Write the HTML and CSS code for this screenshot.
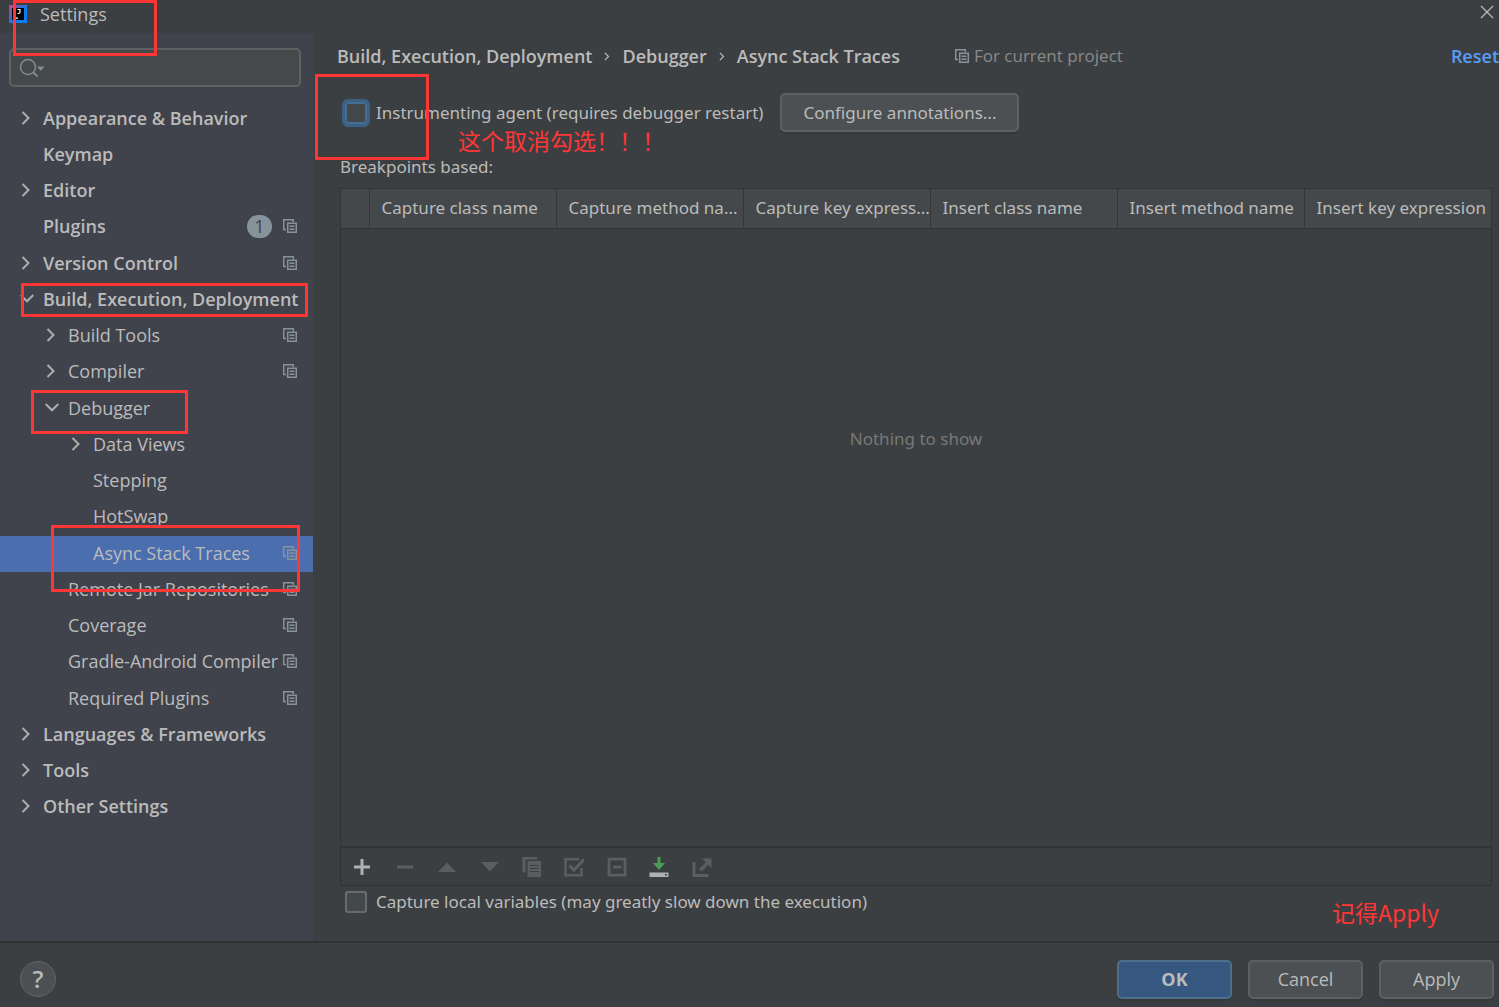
FILE: index.html
```
<!DOCTYPE html>
<html lang="en">
<head>
  <meta charset="UTF-8" />
  <meta name="viewport" content="width=device-width, initial-scale=1.0"/>
  <title>Settings</title>
  <link rel="stylesheet" href="styles.css">
</head>
<body>
  <svg class="sprite" aria-hidden="true">
    <symbol id="right" viewBox="0 0 10 14"><path d="M1.5 1 7.5 7l-6 6" fill="none" stroke="currentColor" stroke-width="2"/></symbol>
    <symbol id="down" viewBox="0 0 14 10"><path d="M.7 1 7 7.3 13.300 1" fill="none" stroke="currentColor" stroke-width="2"/></symbol>
    <symbol id="copy" viewBox="0 0 14 14">
      <path d="M3 10.500H.7V.7h9.600V3" fill="none" stroke="currentColor" stroke-width="1.500"/>
      <path d="M4.700 4.200h8.600v9.100H4.700zM6.500 7.300h5M6.500 10.300h5" fill="none" stroke="currentColor" stroke-width="1.500"/>
    </symbol>
  </svg>

  <header class="titlebar">
    <svg class="logo" viewBox="0 0 18 18" aria-hidden="true">
      <defs>
        <linearGradient id="brand" x1="0" y1="0" x2="1" y2="1">
          <stop offset="0" stop-color="#d8407c"/><stop offset=".35" stop-color="#4f63c8"/><stop offset=".6" stop-color="#0c7cf5"/>
        </linearGradient>
      </defs>
      <rect width="18" height="18" fill="url(#brand)"/>
      <rect x="3" y="3" width="12" height="12" fill="#000"/>
      <path d="M4.500 4.500h2M5.500 4.500v4M8.500 4.500H11V7q0 1.500-1.500 1.500H8.500M4.500 13.200h4.500" fill="none" stroke="#fff" stroke-width="1.200"/>
    </svg>
    <h1>Settings</h1>
    <button class="close" aria-label="Close">
      <svg viewBox="0 0 14 14"><path d="M1 1l12 12M13 1 1 13" stroke="currentColor" stroke-width="1.200"/></svg>
    </button>
  </header>

  <div class="content">
    <aside class="sidebar">
      <div class="search">
        <svg viewBox="0 0 26 20" aria-hidden="true">
          <circle cx="9" cy="9" r="7.500" fill="none" stroke="currentColor" stroke-width="1.500"/>
          <path d="M14 14l4.500 4.500" stroke="currentColor" stroke-width="2"/>
          <path d="M18 8.500h7.500L21.700 13z" fill="currentColor"/>
        </svg>
        <input type="text" aria-label="Search settings">
      </div>
      <ul class="tree">
        <li class="top"><svg class="right"><use href="#right"/></svg><span>Appearance &amp; Behavior</span></li>
        <li class="top"><span>Keymap</span></li>
        <li class="top"><svg class="right"><use href="#right"/></svg><span>Editor</span></li>
        <li class="top"><span>Plugins</span><b class="badge">1</b><svg class="copy"><use href="#copy"/></svg></li>
        <li class="top"><svg class="right"><use href="#right"/></svg><span>Version Control</span><svg class="copy"><use href="#copy"/></svg></li>
        <li class="top"><svg class="down"><use href="#down"/></svg><span>Build, Execution, Deployment</span></li>
        <li class="sub"><svg class="right"><use href="#right"/></svg><span>Build Tools</span><svg class="copy"><use href="#copy"/></svg></li>
        <li class="sub"><svg class="right"><use href="#right"/></svg><span>Compiler</span><svg class="copy"><use href="#copy"/></svg></li>
        <li class="sub"><svg class="down"><use href="#down"/></svg><span>Debugger</span></li>
        <li class="leaf"><svg class="right"><use href="#right"/></svg><span>Data Views</span></li>
        <li class="leaf"><span>Stepping</span></li>
        <li class="leaf"><span>HotSwap</span></li>
        <li class="leaf selected"><span>Async Stack Traces</span><svg class="copy"><use href="#copy"/></svg></li>
        <li class="sub"><span>Remote Jar Repositories</span><svg class="copy"><use href="#copy"/></svg></li>
        <li class="sub"><span>Coverage</span><svg class="copy"><use href="#copy"/></svg></li>
        <li class="sub"><span>Gradle-Android Compiler</span><svg class="copy"><use href="#copy"/></svg></li>
        <li class="sub"><span>Required Plugins</span><svg class="copy"><use href="#copy"/></svg></li>
        <li class="top"><svg class="right"><use href="#right"/></svg><span>Languages &amp; Frameworks</span></li>
        <li class="top"><svg class="right"><use href="#right"/></svg><span>Tools</span></li>
        <li class="top"><svg class="right"><use href="#right"/></svg><span>Other Settings</span></li>
      </ul>
    </aside>

    <main class="main">
      <nav class="crumbs">
        <span>Build, Execution, Deployment</span>
        <svg class="sep"><use href="#right"/></svg>
        <span>Debugger</span>
        <svg class="sep"><use href="#right"/></svg>
        <span>Async Stack Traces</span>
        <span class="scope"><svg class="copy"><use href="#copy"/></svg>For current project</span>
        <a href="#" class="reset">Reset</a>
      </nav>

      <div class="agent">
        <input type="checkbox" id="agent" class="focused">
        <label for="agent">Instrumenting agent (requires debugger restart)</label>
        <button class="btn configure">Configure annotations...</button>
      </div>

      <p class="caption">Breakpoints based:</p>

      <div class="panel">
        <table>
          <thead>
            <tr>
              <th class="check"></th><th>Capture class name</th><th>Capture method na...</th><th>Capture key express...</th><th>Insert class name</th><th>Insert method name</th><th>Insert key expression</th>
            </tr>
          </thead>
        </table>
        <div class="empty">Nothing to show</div>
        <div class="toolbar">
          <button class="on" aria-label="Add"><svg viewBox="0 0 20 20"><path d="M10 2v16M2 10h16" stroke="currentColor" stroke-width="3"/></svg></button>
          <button aria-label="Remove"><svg viewBox="0 0 20 20"><path d="M2 10h16" stroke="currentColor" stroke-width="3"/></svg></button>
          <button aria-label="Up"><svg viewBox="0 0 20 20"><path d="M1 15h18L10 5.500z" fill="currentColor"/></svg></button>
          <button aria-label="Down"><svg viewBox="0 0 20 20"><path d="M1 5h18l-9 9.500z" fill="currentColor"/></svg></button>
          <button aria-label="Duplicate"><svg viewBox="0 0 20 20"><path d="M2 15.500V1h13" fill="none" stroke="currentColor" stroke-width="3"/><path d="M5.500 4H19v16H5.500z" fill="currentColor"/><path d="M8 8.500h8.500M8 11.500h8.500M8 14.500h8.500" stroke="#3c3f41"/></svg></button>
          <button aria-label="Enable selected"><svg viewBox="0 0 20 20"><path d="M15 2.200H1.500v16h16V11" fill="none" stroke="currentColor" stroke-width="2.500"/><path d="M5.500 8.500l4.500 4.500L20 2.500" fill="none" stroke="currentColor" stroke-width="3"/></svg></button>
          <button aria-label="Disable selected"><svg viewBox="0 0 20 20"><path d="M2 2.200h16v16H2zM6 10.200h8.500" fill="none" stroke="currentColor" stroke-width="2.800"/></svg></button>
          <button class="on" aria-label="Import"><svg viewBox="0 0 20 20"><path d="M8.500 0h3v6H16l-6 7-6-7h4.500z" fill="#499c54"/><path d="M.5 15.500h19v5H.5z" fill="currentColor"/><path d="M16 17h2v1.500h-2z" fill="#3c3f41"/></svg></button>
          <button aria-label="Export"><svg viewBox="0 0 20 20"><path d="M2 5v13.500h14.500" fill="none" stroke="currentColor" stroke-width="3"/><path d="M10 1.500h9.500V11L16.300 7.700 9.500 14.500 7 12l6.800-6.800z" fill="currentColor"/></svg></button>
        </div>
      </div>

      <div class="locals">
        <input type="checkbox" id="locals">
        <label for="locals">Capture local variables (may greatly slow down the execution)</label>
      </div>
    </main>
  </div>

  <footer class="footer">
    <button class="help" aria-label="Help">?</button>
    <button class="btn primary">OK</button>
    <button class="btn">Cancel</button>
    <button class="btn">Apply</button>
  </footer>

  <!-- red marks over the dialog -->
  <div class="mark mark-title"></div>
  <div class="mark mark-build"></div>
  <div class="mark mark-debugger"></div>
  <div class="mark mark-async"></div>
  <div class="mark mark-agent"></div>
  <p class="note note-agent" lang="zh-CN">这个取消勾选！！！</p>
  <p class="note note-apply" lang="zh-CN">记得Apply</p>
</body>
</html>
```
FILE: styles.css
```
* {
  box-sizing: border-box;
}
body {
  position: relative;
  display: flex;
  flex-direction: column;
  min-height: 100vh;
  margin: 0;
  overflow-x: hidden;
  background-color: #3c3f41;
  color: #bbbbbb;
  font-family: "Open Sans", "Noto Sans CJK SC", sans-serif;
  font-size: 18px;
  line-height: 24px;
}
button, input {
  font: inherit;
  color: inherit;
}
h1, p, ul {
  margin: 0;
  padding: 0;
}
svg {
  display: block;
  flex: none;
}
.sprite {
  position: absolute;
  width: 0;
  height: 0;
}

/* title bar */
.titlebar {
  display: flex;
  align-items: center;
  height: 33px;
  padding: 0 5px 6px 9px;
}
.logo {
  width: 18px;
  height: 18px;
}
.titlebar h1 {
  margin-left: 13px;
  font-size: 18px;
  font-weight: normal;
}
.close {
  margin-left: auto;
  padding: 0 0 3px;
  border: 0;
  background: none;
}
.close svg {
  width: 14px;
  height: 14px;
}

.content {
  display: flex;
  flex: 1;
}

/* sidebar */
.sidebar {
  flex: none;
  width: 313px;
  padding-top: 15px;
  background-color: #40434c;
}
.search {
  display: flex;
  align-items: center;
  height: 39px;
  margin: 0 12px 14px 9px;
  padding-left: 8px;
  border: 2px solid #5f6263;
  border-radius: 5px;
  background-color: #45494a;
}
.search svg {
  width: 26px;
  height: 20px;
  color: #7d8b96;
}
.search input {
  flex: 1;
  min-width: 0;
  border: 0;
  outline: 0;
  background: none;
}
.tree {
  display: grid;
  grid-template-columns: 100%;
  grid-auto-rows: 1fr;
  height: 725px;
  list-style: none;
}
.tree li {
  display: flex;
  align-items: center;
  padding-right: 16px;
  padding-bottom: 3px;
  white-space: nowrap;
}
.tree span {
  margin-right: auto;
}
.top {
  padding-left: 43px;
  font-weight: 600;
}
.sub {
  padding-left: 68px;
}
.leaf {
  padding-left: 93px;
}
.selected {
  background-color: #4b6eaf;
}
.right {
  width: 10px;
  height: 14px;
  margin: 0 12px 0 -22px;
  color: #adadad;
}
.down {
  width: 14px;
  height: 10px;
  margin: 0 9px 0 -23px;
  color: #adadad;
}
.copy {
  width: 14px;
  height: 14px;
  color: #87939a;
}
.badge {
  width: 25px;
  height: 23px;
  margin-right: 11px;
  border-radius: 12px;
  background-color: #87939a;
  color: #40434c;
  font-weight: normal;
  line-height: 23px;
  text-align: center;
}

/* right side */
.main {
  display: flex;
  flex: 1;
  flex-direction: column;
  min-width: 0;
  padding: 11px 7px 27px 27px;
  font-family: "Noto Sans", sans-serif;
  font-size: 17px;
}
.crumbs {
  display: flex;
  align-items: center;
  margin: 0 -7px 0 -3px;
  font-family: "Open Sans", sans-serif;
  font-size: 18px;
  font-weight: 600;
  white-space: nowrap;
}
.sep {
  width: 6px;
  height: 9px;
  margin: 0 12px;
}
.scope {
  display: flex;
  align-items: center;
  gap: 5px;
  margin-left: 55px;
  color: #8a8a8a;
  font-size: 17px;
  font-weight: normal;
}
.reset {
  margin-left: auto;
  color: #589df6;
  text-decoration: none;
}
.agent {
  display: flex;
  align-items: center;
  margin-top: 25px;
  padding-left: 5px;
}
input[type="checkbox"] {
  appearance: none;
  flex: none;
  width: 22px;
  height: 22px;
  margin: 0 9px 0 0;
  border: 2px solid #6b6b6b;
  border-radius: 3px;
  background-color: #43494a;
}
input.focused {
  border-color: #466d94;
  outline: 3px solid #3d6185;
}
.btn {
  width: 115px;
  height: 39px;
  padding: 0;
  border: 2px solid #5e6060;
  border-radius: 5px;
  background-color: #4c5052;
  box-shadow: 0 2px 1px #36393a;
}
.configure {
  width: 239px;
  margin-left: 17px;
}
.caption {
  margin: 23px 0 9px;
}
.panel {
  display: flex;
  flex: 1;
  flex-direction: column;
  border: 1px solid #323232;
}
table {
  width: 100%;
  border-collapse: collapse;
  table-layout: fixed;
  background-color: #45484a;
}
th {
  height: 39px;
  padding: 0 0 0 12px;
  border-bottom: 1px solid #323232;
  border-left: 1px solid #34373a;
  font-weight: normal;
  text-align: left;
  white-space: nowrap;
}
.check {
  width: 28px;
  padding: 0;
  border-left: 0;
}
.empty {
  flex: 1;
  padding-top: 198px;
  color: #787878;
  text-align: center;
}
.toolbar {
  display: grid;
  grid-template-columns: repeat(9, 1fr);
  align-items: center;
  width: 100%;
  height: 39px;
  padding-right: calc(100% - 382px);
  border-top: 2px solid #323232;
}
.toolbar button {
  display: flex;
  justify-content: center;
  padding: 0;
  border: 0;
  background: none;
  color: #5b5d5e;
}
.toolbar .on {
  color: #afb1b3;
}
.toolbar svg {
  width: 20px;
  height: 20px;
}
.locals {
  display: flex;
  align-items: center;
  margin-top: 4px;
  padding-left: 5px;
}

/* footer */
.footer {
  display: flex;
  align-items: center;
  gap: 16px;
  height: 66px;
  padding: 8px 5px 0 20px;
  border-top: 2px solid #323232;
}
.help {
  width: 36px;
  height: 36px;
  margin-right: auto;
  padding: 0;
  border: 1px solid #636667;
  border-radius: 50%;
  background-color: #4c5052;
  font-size: 24px;
  font-weight: 600;
}
.primary {
  border-color: #4c708c;
  background-color: #365880;
  font-weight: bold;
}

/* red marks */
.mark {
  position: absolute;
  border: 3px solid #ff3636;
  pointer-events: none;
}
.mark-title {
  top: 0;
  left: 13px;
  width: 144px;
  height: 56px;
}
.mark-build {
  top: 283px;
  left: 21px;
  width: 287px;
  height: 34px;
}
.mark-debugger {
  top: 390px;
  left: 31px;
  width: 157px;
  height: 44px;
}
.mark-async {
  top: 525px;
  left: 51px;
  width: 249px;
  height: 67px;
}
.mark-agent {
  top: 74px;
  left: 315px;
  width: 114px;
  height: 86px;
}
.note {
  position: absolute;
  color: #ff3636;
  font-family: "Noto Sans CJK SC", sans-serif;
  font-size: 23px;
  line-height: 28px;
  white-space: nowrap;
}
.note-agent {
  top: 126px;
  left: 458px;
}
.note-apply {
  right: 60px;
  bottom: 81px;
}
```
